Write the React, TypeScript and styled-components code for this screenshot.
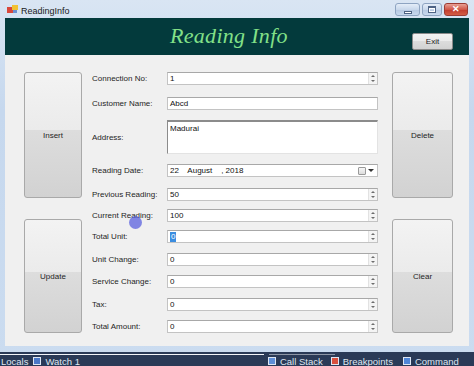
import React from 'react';
import styled, { createGlobalStyle } from 'styled-components';

const GlobalStyle = createGlobalStyle`
  html, body {
    margin: 0;
    padding: 0;
    background: #c9dbef;
  }
  * {
    box-sizing: border-box;
  }
`;

const Screen = styled.div`
  position: relative;
  width: 474px;
  height: 366px;
  overflow: hidden;
  display: flex;
  flex-direction: column;
  font-family: "Liberation Sans", Arial, sans-serif;
  background: linear-gradient(to bottom, #d9e5f3, #c6d8ee 30%, #cbdcf0);
`;

const TitleBar = styled.div`
  height: 18px;
  display: flex;
  align-items: center;
  padding: 0 6px 0 7px;
  font-size: 9px;
  color: #1a1a1a;
`;

const TitleText = styled.span`
  margin-left: 2px;
  margin-top: 3px;
`;

const Controls = styled.div`
  margin-left: auto;
  display: flex;
  gap: 2px;
  align-self: flex-start;
  margin-top: 3px;
`;

const CtrlButton = styled.div<{ $w: number; $close?: boolean }>`
  width: ${({ $w }) => $w}px;
  height: 13px;
  border: 1px solid ${({ $close }) => ($close ? '#9c3b33' : '#8ea4c1')};
  border-radius: 3px;
  background: ${({ $close }) =>
    $close
      ? 'linear-gradient(to bottom, #e8a095, #d0584a 50%, #c03a2c 51%, #d35c44)'
      : 'linear-gradient(to bottom, #e4edf8, #c9d8eb 50%, #b5c8e1 51%, #c8d9ee)'};
  display: flex;
  align-items: center;
  justify-content: center;
  color: #fff;
  font-size: 9px;
  font-weight: bold;
  line-height: 1;
`;

const MinGlyph = styled.div`
  width: 8px;
  height: 3px;
  margin-top: 5px;
  background: #fff;
  border: 1px solid #4d6384;
`;

const MaxGlyph = styled.div`
  width: 8px;
  height: 7px;
  background: transparent;
  border: 1px solid #4d6384;
  border-top-width: 2px;
  box-shadow: inset 0 0 0 1px #fff;
`;

const Frame = styled.div`
  flex: 1;
  display: flex;
  flex-direction: column;
  margin: 0 5px 6px 5px;
`;

const Header = styled.div`
  height: 37px;
  background: #033a3c;
  display: flex;
  align-items: center;
  padding: 0 16px 0 165px;
`;

const HeaderTitle = styled.h1`
  margin: 0 0 2px 0;
  font-family: "Liberation Serif", "DejaVu Serif", serif;
  font-style: italic;
  font-weight: normal;
  font-size: 22px;
  color: #82e088;
  letter-spacing: 0.3px;
`;

const buttonFace = `
  border: 1px solid #a9a9a9;
  border-radius: 3px;
  background: linear-gradient(to bottom, #f3f3f3 0%, #ebebeb 46%, #dddddd 46%, #d2d2d2 100%);
  font-family: "Liberation Sans", Arial, sans-serif;
  font-size: 8px;
  color: #1e1e1e;
  display: flex;
  align-items: center;
  justify-content: center;
  padding: 0;
`;

const ExitButton = styled.button`
  ${buttonFace}
  margin-left: auto;
  align-self: flex-end;
  margin-bottom: 5px;
  width: 41px;
  height: 17px;
  border-color: #8a8a8a;
  border-radius: 2px;
`;

const Form = styled.div`
  flex: 1;
  background: #f0f0f0;
  display: flex;
  align-items: flex-start;
  padding: 17px 16px 0 19px;
`;

const ButtonColumn = styled.div<{ $side: 'left' | 'right' }>`
  width: ${({ $side }) => ($side === 'left' ? 58 : 61)}px;
  margin: ${({ $side }) => ($side === 'left' ? '0 10px 0 0' : '0 0 0 14px')};
  display: flex;
  flex-direction: column;
  gap: 21px;
`;

const BigButton = styled.button<{ $h: number }>`
  ${buttonFace}
  height: ${({ $h }) => $h}px;
  width: 100%;
`;

const Fields = styled.div`
  width: 286px;
  display: flex;
  flex-direction: column;
`;

const Row = styled.div<{ $gap: number }>`
  display: grid;
  grid-template-columns: 75px 211px;
  align-items: center;
  margin-top: ${({ $gap }) => $gap}px;
`;

const Label = styled.label`
  font-size: 8px;
  color: #1e1e1e;
  white-space: nowrap;
`;

const Box = styled.div<{ $h?: number }>`
  height: ${({ $h }) => $h ?? 13}px;
  background: #fff;
  border: 1px solid #c3c3c3;
  border-top-color: #a8a8a8;
  display: flex;
  align-items: center;
  font-size: 8px;
  color: #111;
  padding-left: 2px;
`;

const Memo = styled(Box)`
  align-items: flex-start;
  border-top: 2px solid #8b8b8b;
  border-left: 1px solid #8b8b8b;
  border-right-color: #e3e3e3;
  border-bottom-color: #e3e3e3;
  padding-top: 2px;
`;

const Value = styled.span<{ $selected?: boolean }>`
  background: ${({ $selected }) => ($selected ? '#3b8de0' : 'transparent')};
  color: ${({ $selected }) => ($selected ? '#fff' : '#111')};
  padding: 0 ${({ $selected }) => ($selected ? 1 : 0)}px;
  line-height: 10px;
`;

const Spinner = styled.div`
  margin-left: auto;
  width: 9px;
  height: 11px;
  border-left: 1px solid #e2e2e2;
  display: flex;
  flex-direction: column;
  align-items: center;
  justify-content: space-evenly;
  background: #f4f4f4;
`;

const Arrow = styled.div<{ $down?: boolean }>`
  width: 0;
  height: 0;
  border-left: 2px solid transparent;
  border-right: 2px solid transparent;
  ${({ $down }) => ($down ? 'border-top: 2px solid #6d6d6d;' : 'border-bottom: 2px solid #6d6d6d;')}
`;

const DateText = styled.span`
  white-space: pre;
`;

const CalendarIcon = styled.div`
  margin-left: auto;
  width: 8px;
  height: 8px;
  border: 1px solid #9a9a9a;
  border-radius: 1px;
  background: linear-gradient(to bottom, #f7f7f7, #dcdcdc);
`;

const DropArrow = styled.div`
  margin: 0 3px 0 2px;
  border-left: 3px solid transparent;
  border-right: 3px solid transparent;
  border-top: 3px solid #333;
`;

const CursorDot = styled.div`
  position: absolute;
  left: 129px;
  top: 216px;
  width: 13px;
  height: 13px;
  border-radius: 50%;
  background: rgba(84, 92, 222, 0.72);
`;

const TaskBar = styled.div`
  height: 14px;
  background: #2a3a57;
  display: flex;
  flex-direction: column;
`;

const Strip = styled.div`
  height: 2px;
  margin-top: 2px;
  display: flex;
`;

const StripPart = styled.div<{ $w: number; $c: string; $ml?: number }>`
  width: ${({ $w }) => $w}px;
  margin-left: ${({ $ml }) => $ml ?? 0}px;
  background: ${({ $c }) => $c};
`;

const Tabs = styled.div`
  display: flex;
  align-items: center;
  padding-left: 1px;
  height: 10px;
  margin-top: 1px;
  font-size: 9.5px;
  color: #dfe6f1;
`;

const Tab = styled.div<{ $ml: number }>`
  display: flex;
  align-items: center;
  gap: 4px;
  margin-left: ${({ $ml }) => $ml}px;
  white-space: nowrap;
`;

const TabIcon = styled.div<{ $c: string }>`
  width: 8px;
  height: 8px;
  background: ${({ $c }) => $c};
  border: 1px solid #dde6f3;
`;

const AppIcon = () => (
  <svg width="12" height="10" viewBox="0 0 12 10">
    <rect x="0" y="3" width="6" height="6" fill="#d9483b" />
    <rect x="5" y="1" width="6" height="5" fill="#f1c232" />
    <rect x="6" y="6" width="4" height="3" fill="#6a8fd0" />
  </svg>
);

const NumberBox = ({ value, selected }: { value: string; selected?: boolean }) => (
  <Box>
    <Value $selected={selected}>{value}</Value>
    <Spinner>
      <Arrow />
      <Arrow $down />
    </Spinner>
  </Box>
);

const lowerRows = [
  { label: 'Current Reading:', value: '100', gap: 8 },
  { label: 'Total Unit:', value: '0', gap: 8, selected: true },
  { label: 'Unit Change:', value: '0', gap: 10 },
  { label: 'Service Change:', value: '0', gap: 9 },
  { label: 'Tax:', value: '0', gap: 10 },
  { label: 'Total Amount:', value: '0', gap: 9 },
];

export default function App() {
  return (
    <Screen>
      <GlobalStyle />
      <TitleBar>
        <AppIcon />
        <TitleText>ReadingInfo</TitleText>
        <Controls>
          <CtrlButton $w={25}>
            <MinGlyph />
          </CtrlButton>
          <CtrlButton $w={20}>
            <MaxGlyph />
          </CtrlButton>
          <CtrlButton $w={24} $close>
            ✕
          </CtrlButton>
        </Controls>
      </TitleBar>

      <Frame>
        <Header>
          <HeaderTitle>Reading Info</HeaderTitle>
          <ExitButton type="button">Exit</ExitButton>
        </Header>

        <Form>
          <ButtonColumn $side="left">
            <BigButton type="button" $h={126}>Insert</BigButton>
            <BigButton type="button" $h={114}>Update</BigButton>
          </ButtonColumn>

          <Fields>
            <Row $gap={0}>
              <Label>Connection No:</Label>
              <NumberBox value="1" />
            </Row>
            <Row $gap={12}>
              <Label>Customer Name:</Label>
              <Box>Abcd</Box>
            </Row>
            <Row $gap={10}>
              <Label>Address:</Label>
              <Memo $h={34}>Madurai</Memo>
            </Row>
            <Row $gap={10}>
              <Label>Reading Date:</Label>
              <Box>
                <DateText>{'22    August    , 2018'}</DateText>
                <CalendarIcon />
                <DropArrow />
              </Box>
            </Row>
            <Row $gap={11}>
              <Label>Previous Reading:</Label>
              <NumberBox value="50" />
            </Row>
            {lowerRows.map((row) => (
              <Row key={row.label} $gap={row.gap}>
                <Label>{row.label}</Label>
                <NumberBox value={row.value} selected={row.selected} />
              </Row>
            ))}
          </Fields>

          <ButtonColumn $side="right">
            <BigButton type="button" $h={126}>Delete</BigButton>
            <BigButton type="button" $h={114}>Clear</BigButton>
          </ButtonColumn>
        </Form>
      </Frame>

      <TaskBar>
        <Strip>
          <StripPart $w={264} $c="#f2f4f8" />
          <StripPart $w={66} $c="#8d96a6" $ml={5} />
        </Strip>
        <Tabs>
          <Tab $ml={0}>Locals</Tab>
          <Tab $ml={5}>
            <TabIcon $c="#4a78c8" />
            Watch 1
          </Tab>
          <Tab $ml={188}>
            <TabIcon $c="#5f8fd8" />
            Call Stack
          </Tab>
          <Tab $ml={8}>
            <TabIcon $c="#d8503e" />
            Breakpoints
          </Tab>
          <Tab $ml={10}>
            <TabIcon $c="#4f86d8" />
            Command
          </Tab>
        </Tabs>
      </TaskBar>

      <CursorDot />
    </Screen>
  );
}
